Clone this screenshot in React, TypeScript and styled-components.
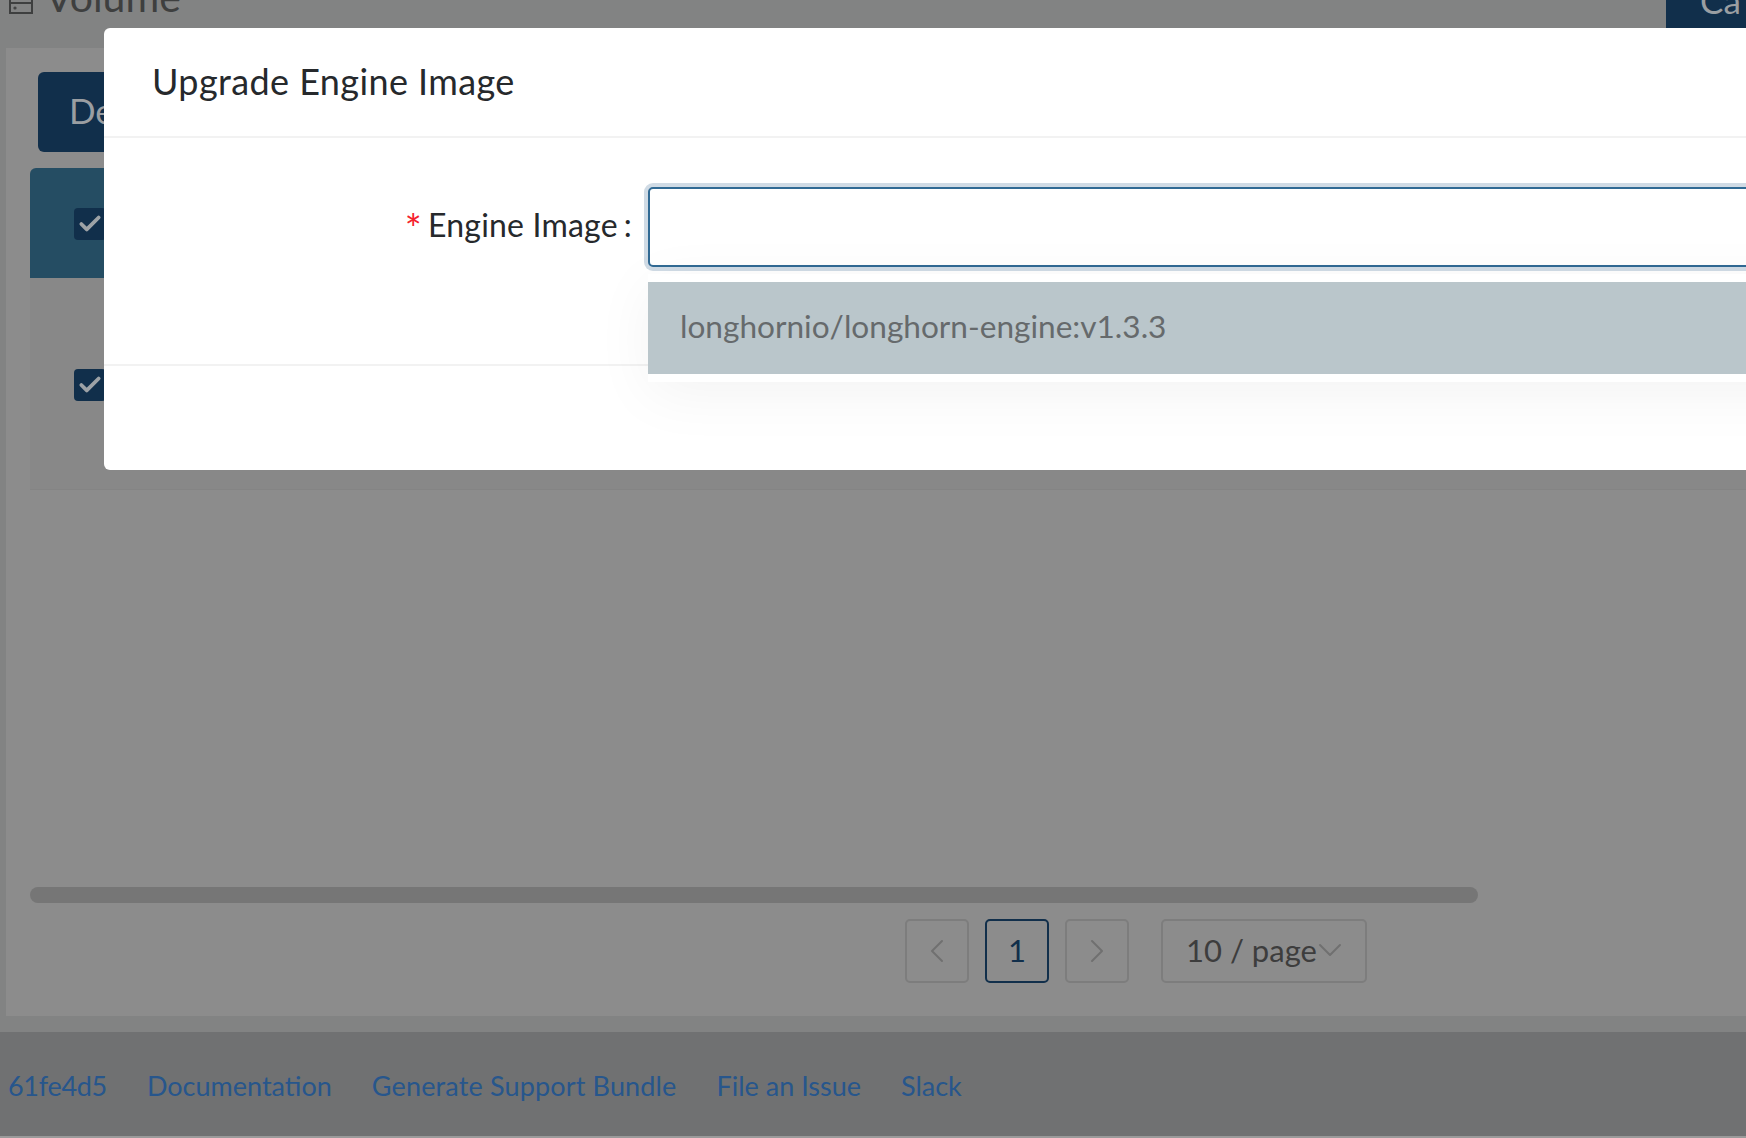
import React from 'react';
import styled, { createGlobalStyle } from 'styled-components';
import { ChevronLeft, ChevronRight, ChevronDown, Check } from 'lucide-react';

/**
 * Styles
 */
const GlobalStyle = createGlobalStyle`
    html, body {
        margin: 0;
        padding: 0;
        height: 100%;
        overflow: hidden;
        background: #8a8b8b;
    }
    body {
        font-family: Lato, "Open Sans", "Liberation Sans", sans-serif;
    }
`;

const Page = styled.div`
    position: relative;
    width: 1746px;
    height: 1138px;
    overflow: hidden;
    display: flex;
    flex-direction: column;
    background: #828383;
`;

const TitleBar = styled.div`
    height: 48px;
    flex: none;
    display: flex;
    justify-content: space-between;
    overflow: hidden;
`;

const PageTitle = styled.div`
    display: flex;
    align-items: center;
    gap: 12px;
    height: 36px;
    margin: -21px 0 0 9px;
    font-size: 41px;
    line-height: 36px;
    color: #3e3f3f;
`;

const TopButton = styled.div`
    width: 80px;
    height: 28px;
    padding-left: 34px;
    box-sizing: border-box;
    background: #112f4b;
    color: #9a9ea2;
    font-size: 35px;
    line-height: 0;
    overflow: hidden;
`;

const ContentPanel = styled.div`
    flex: none;
    height: 968px;
    margin-left: 6px;
    padding: 24px 0 0 24px;
    box-sizing: border-box;
    background: #8c8c8c;
    display: flex;
    flex-direction: column;
`;

const DeleteButton = styled.div`
    width: 120px;
    height: 80px;
    margin-left: 8px;
    padding-left: 31px;
    box-sizing: border-box;
    border-radius: 6px;
    background: #112f4b;
    color: #9a9ea2;
    font-size: 35px;
    line-height: 77px;
`;

const Table = styled.div`
    height: 322px;
    flex: none;
    margin-top: 16px;
    box-sizing: border-box;
    background: #888888;
    border-bottom: 1px solid #848484;
    border-radius: 6px 6px 0 0;
    overflow: hidden;
`;

const TableHead = styled.div`
    height: 110px;
    padding: 2px 0 0 44px;
    box-sizing: border-box;
    display: flex;
    align-items: center;
    background: #254d63;
`;

const TableRow = styled.div`
    height: 211px;
    padding: 91px 0 0 44px;
    box-sizing: border-box;
`;

const RowCheck = styled.div`
    width: 32px;
    height: 32px;
    border-radius: 4px;
    background: #112f4b;
    color: #9da2a6;
    display: flex;
    align-items: center;
    justify-content: center;
`;

const ScrollBar = styled.div`
    width: 1448px;
    height: 16px;
    margin-top: 397px;
    border-radius: 8px;
    background: #767676;
`;

const Pagination = styled.div`
    display: flex;
    align-items: flex-start;
    gap: 16px;
    margin: 16px 0 0 875px;
`;

const PageButton = styled.div<{ $active?: boolean }>`
    width: 64px;
    height: 64px;
    box-sizing: border-box;
    border: 2px solid ${(props) => (props.$active ? '#112f4b' : '#7d7d7d')};
    border-radius: 5px;
    display: flex;
    align-items: center;
    justify-content: center;
    padding-bottom: ${(props) => (props.$active ? '3px' : '0')};
    color: ${(props) => (props.$active ? '#112f4b' : '#707070')};
    font-size: 31px;
`;

const SizeSelect = styled.div`
    width: 206px;
    height: 64px;
    margin-left: 16px;
    padding: 0 0 3px 23px;
    box-sizing: border-box;
    border: 2px solid #7d7d7d;
    border-radius: 5px;
    display: flex;
    align-items: center;
    color: #3d3d3d;
    font-size: 31px;
    white-space: nowrap;
    svg {
        margin-left: -7px;
        color: #707070;
        flex: none;
    }
`;

const Footer = styled.div`
    flex: none;
    height: 106px;
    margin-top: 16px;
    padding: 2px 0 0 8px;
    box-sizing: border-box;
    display: flex;
    align-items: center;
    gap: 40px;
    background: #707172;
    border-bottom: 2px solid #9a9a9a;
`;

const FooterLink = styled.a<{ $spacing?: number }>`
    color: #27568c;
    font-size: 27px;
    letter-spacing: ${(props) => props.$spacing || 0}px;
`;

const Modal = styled.div`
    position: absolute;
    left: 104px;
    top: 28px;
    width: 1700px;
    height: 442px;
    background: #fff;
    border-radius: 6px 0 0 6px;
    display: flex;
    flex-direction: column;
`;

const ModalHeader = styled.div`
    height: 110px;
    flex: none;
    padding-left: 48px;
    box-sizing: border-box;
    border-bottom: 2px solid #f2f2f2;
    color: #26292c;
    font-size: 36px;
    letter-spacing: 0.4px;
    line-height: 106px;
`;

const ModalBody = styled.div`
    height: 228px;
    flex: none;
    padding-top: 49px;
    box-sizing: border-box;
    border-bottom: 2px solid #f2f2f2;
    display: flex;
    align-items: flex-start;
`;

const FieldLabel = styled.label`
    width: 544px;
    height: 80px;
    flex: none;
    padding: 0 16px 5px 0;
    box-sizing: border-box;
    display: flex;
    align-items: center;
    justify-content: flex-end;
    color: #26292c;
    font-size: 32px;
    letter-spacing: 0.2px;
    white-space: nowrap;
`;

const Required = styled.span`
    margin-right: 6px;
    color: #f5222d;
    font-size: 40px;
    line-height: 32px;
    padding-top: 8px;
`;

const Colon = styled.span`
    margin-left: 6px;
`;

const FieldInput = styled.div`
    width: 1200px;
    height: 80px;
    flex: none;
    box-sizing: border-box;
    border: 2px solid #316a94;
    border-radius: 5px;
    background: #fff;
    box-shadow: 0 0 0 4px #d0dbe5;
`;

const Dropdown = styled.div`
    position: absolute;
    left: 544px;
    top: 246px;
    width: 1200px;
    padding: 8px 0;
    background: #fff;
    box-shadow: 0 12px 60px rgba(0, 0, 0, 0.05);
`;

const DropdownItem = styled.div`
    height: 92px;
    padding-left: 32px;
    background: #bac6cb;
    color: #666a6c;
    font-size: 31.6px;
    line-height: 88px;
`;

/**
 * Main Components
 */
const App = () => {
    return (
        <Page>
            <GlobalStyle />
            <TitleBar>
                <PageTitle>
                    <svg width="24" height="33" viewBox="0 0 24 33" fill="none" stroke="currentColor" strokeWidth="2">
                        <rect x="1" y="1" width="22" height="31" />
                        <path d="M1 22h22" />
                        <circle cx="6" cy="27" r="0.6" fill="currentColor" />
                    </svg>
                    Volume
                </PageTitle>
                <TopButton>Ca</TopButton>
            </TitleBar>
            <ContentPanel>
                <DeleteButton>De</DeleteButton>
                <Table>
                    <TableHead>
                        <RowCheck><Check size={26} strokeWidth={3.5} /></RowCheck>
                    </TableHead>
                    <TableRow>
                        <RowCheck><Check size={26} strokeWidth={3.5} /></RowCheck>
                    </TableRow>
                </Table>
                <ScrollBar />
                <Pagination>
                    <PageButton><ChevronLeft size={40} strokeWidth={1.2} /></PageButton>
                    <PageButton $active>1</PageButton>
                    <PageButton><ChevronRight size={40} strokeWidth={1.2} /></PageButton>
                    <SizeSelect>10 / page<ChevronDown size={40} strokeWidth={1.2} /></SizeSelect>
                </Pagination>
            </ContentPanel>
            <Footer>
                <FooterLink $spacing={-0.3}>61fe4d5</FooterLink>
                <FooterLink>Documentation</FooterLink>
                <FooterLink $spacing={0.15}>Generate Support Bundle</FooterLink>
                <FooterLink>File an Issue</FooterLink>
                <FooterLink>Slack</FooterLink>
            </Footer>
            <Modal>
                <ModalHeader>Upgrade Engine Image</ModalHeader>
                <ModalBody>
                    <FieldLabel>
                        <Required>*</Required>Engine Image<Colon>:</Colon>
                    </FieldLabel>
                    <FieldInput />
                </ModalBody>
                <Dropdown>
                    <DropdownItem>longhornio/longhorn-engine:v1.3.3</DropdownItem>
                </Dropdown>
            </Modal>
        </Page>
    );
};

export default App;
